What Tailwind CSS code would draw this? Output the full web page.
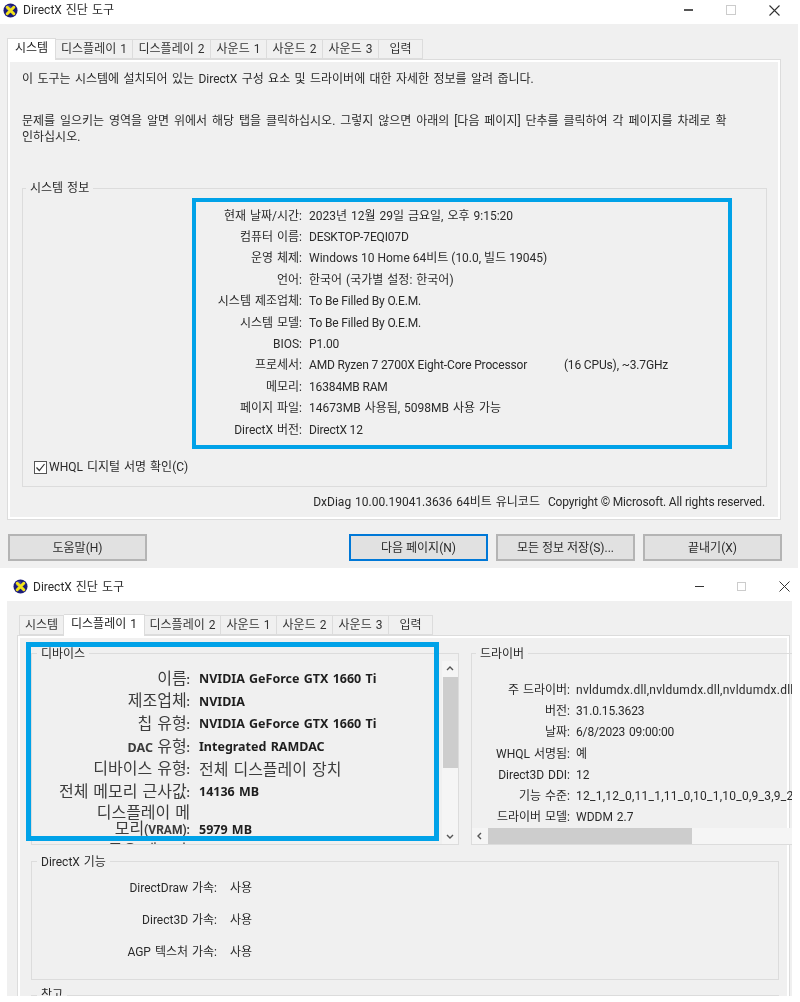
<!DOCTYPE html>
<html lang="ko">

<head>
  <meta charset="UTF-8">
  <title>DirectX 진단 도구</title>
  <script src="https://cdn.jsdelivr.net/npm/@tailwindcss/browser@4"></script>
</head>

<body class="bg-white text-[#2a2a2a] text-[12px] leading-[16px] [word-spacing:1px] font-['Roboto','Noto_Sans_CJK_KR',sans-serif] overflow-hidden">
  <div class="w-[800px] h-[1002px] overflow-hidden blur-[0.3px]">

    <!-- Window 1: system tab -->
    <section class="h-[568px] w-[798px] bg-[#f0f0f0] relative">
      <header class="h-[24px] bg-white flex items-center pl-[3px] pb-[4px]">
        <svg class="w-[15px] h-[15px]" viewBox="0 0 16 16">
          <circle cx="8" cy="8" r="7.5" fill="#1c1c7a" />
          <circle cx="6" cy="5" r="3" fill="#5a5ac0" opacity=".6" />
          <path d="M4.5 4.5 11.5 11.5M11.5 4.5 4.5 11.5" stroke="#f2e21c" stroke-width="3.2" stroke-linecap="round" />
        </svg>
        <span class="ml-[5px]">DirectX 진단 도구</span>
        <div class="ml-auto flex items-center pr-[18px] gap-[33px]">
          <span class="w-[9px] h-[2px] bg-[#555]"></span>
          <span class="w-[10px] h-[10px] border border-[#ccc]"></span>
          <svg class="w-[11px] h-[11px]" viewBox="0 0 11 11">
            <path d="M.5.5l10 10M10.5.5l-10 10" stroke="#333" stroke-width="1.1" fill="none" />
          </svg>
        </div>
      </header>

      <div class="pt-[13px] pl-[7px] flex items-end h-[35px] relative z-10 text-[#333]">
        <div class="h-[22px] w-[49px] -mb-px border border-[#dcdcdc] border-b-0 bg-white flex items-center justify-center text-[#222] pb-[3px]">시스템</div>
        <div class="h-[20px] w-[77px] border border-l-0 border-[#dcdcdc] flex items-center justify-center">디스플레이 1</div>
        <div class="h-[20px] w-[78px] border border-l-0 border-[#dcdcdc] flex items-center justify-center">디스플레이 2</div>
        <div class="h-[20px] w-[56px] border border-l-0 border-[#dcdcdc] flex items-center justify-center">사운드 1</div>
        <div class="h-[20px] w-[56px] border border-l-0 border-[#dcdcdc] flex items-center justify-center">사운드 2</div>
        <div class="h-[20px] w-[56px] border border-l-0 border-[#dcdcdc] flex items-center justify-center">사운드 3</div>
        <div class="h-[20px] w-[44px] border border-l-0 border-[#dcdcdc] flex items-center justify-center">입력</div>
      </div>

      <div class="ml-[7px] w-[774px] h-[461px] border border-[#dcdcdc] relative">
        <div class="h-full border-2 border-white px-[12px] pt-[9px]">
          <p class="h-[16px] whitespace-nowrap [word-spacing:1.4px]">이 도구는 시스템에 설치되어 있는 DirectX 구성 요소 및 드라이버에 대한 자세한 정보를 알려 줍니다.</p>
          <p class="mt-[26px] w-[730px] [word-spacing:1.9px]">문제를 일으키는 영역을 알면 위에서 해당 탭을 클릭하십시오. 그렇지 않으면 아래의 [다음 페이지] 단추를 클릭하여 각 페이지를 차례로 확<br>인하십시오.</p>

          <fieldset class="mt-[35px] w-[745px] h-[307px] border border-[#dcdcdc]">
            <legend class="ml-[3px] px-[4px] h-[16px]">시스템 정보</legend>
            <div class="pt-[9px]">
              <div class="h-[21.4px] flex items-center"><span class="w-[279px] text-right">현재 날짜/시간:</span><span class="ml-[7px]">2023년 12월 29일 금요일, 오후 9:15:20</span></div>
              <div class="h-[21.4px] flex items-center"><span class="w-[279px] text-right">컴퓨터 이름:</span><span class="ml-[7px] [word-spacing:0] tracking-[-0.15px]">DESKTOP-7EQI07D</span></div>
              <div class="h-[21.4px] flex items-center"><span class="w-[279px] text-right">운영 체제:</span><span class="ml-[7px] [word-spacing:0]">Windows 10 Home 64비트 (10.0, 빌드 19045)</span></div>
              <div class="h-[21.4px] flex items-center"><span class="w-[279px] text-right">언어:</span><span class="ml-[7px]">한국어 (국가별 설정: 한국어)</span></div>
              <div class="h-[21.4px] flex items-center"><span class="w-[279px] text-right">시스템 제조업체:</span><span class="ml-[7px] [word-spacing:0] tracking-[-0.15px]">To Be Filled By O.E.M.</span></div>
              <div class="h-[21.4px] flex items-center"><span class="w-[279px] text-right">시스템 모델:</span><span class="ml-[7px] [word-spacing:0] tracking-[-0.15px]">To Be Filled By O.E.M.</span></div>
              <div class="h-[21.4px] flex items-center"><span class="w-[279px] text-right">BIOS:</span><span class="ml-[7px] tracking-[-0.15px]">P1.00</span></div>
              <div class="h-[21.4px] flex items-center"><span class="w-[279px] text-right">프로세서:</span><span class="ml-[7px] whitespace-pre [word-spacing:0] tracking-[-0.15px]">AMD Ryzen 7 2700X Eight-Core Processor             (16 CPUs), ~3.7GHz</span></div>
              <div class="h-[21.4px] flex items-center"><span class="w-[279px] text-right">메모리:</span><span class="ml-[7px] [word-spacing:0] tracking-[-0.15px]">16384MB RAM</span></div>
              <div class="h-[21.4px] flex items-center"><span class="w-[279px] text-right">페이지 파일:</span><span class="ml-[7px]">14673MB 사용됨, 5098MB 사용 가능</span></div>
              <div class="h-[21.4px] flex items-center"><span class="w-[279px] text-right">DirectX 버전:</span><span class="ml-[7px] [word-spacing:0] tracking-[-0.15px]">DirectX 12</span></div>
            </div>
            <label class="mt-[19px] ml-[11px] flex items-center">
              <span class="w-[13px] h-[13px] border border-[#555] bg-white flex items-center justify-center">
                <svg class="w-[11px] h-[11px]" viewBox="0 0 11 11">
                  <path d="M1.5 5.5 4.3 8.5 9.5 2" stroke="#333" stroke-width="1.2" fill="none" />
                </svg>
              </span>
              <span class="ml-[2px]">WHQL 디지털 서명 확인(C)</span>
            </label>
          </fieldset>

          <p class="mt-[7px] w-[743px] text-right whitespace-nowrap">DxDiag 10.00.19041.3636 64비트 유니코드&nbsp; <span class="[word-spacing:0] tracking-[-0.15px]">Copyright © Microsoft. All rights reserved.</span></p>
        </div>

        <!-- highlight -->
        <div class="absolute left-[184px] top-[138px] w-[540px] h-[251px] border-[4px] border-[#00a2e8]"></div>
      </div>

      <div class="mt-[14px] px-[8px] flex">
        <button class="w-[139px] h-[27px] bg-[#e1e1e1] border-2 border-[#b4b4b4]">도움말(H)</button>
        <button class="ml-[202px] w-[139px] h-[27px] bg-[#e1e1e1] border-2 border-[#0078d7]">다음 페이지(N)</button>
        <button class="ml-[8px] w-[139px] h-[27px] bg-[#e1e1e1] border-2 border-[#b4b4b4]">모든 정보 저장(S)...</button>
        <button class="ml-[8px] w-[139px] h-[27px] bg-[#e1e1e1] border-2 border-[#b4b4b4]">끝내기(X)</button>
      </div>
    </section>

    <!-- Window 2: display tab -->
    <section class="h-[428px] bg-white">
      <header class="h-[33px] flex items-center pl-[13px] pt-[4px]">
        <svg class="w-[15px] h-[15px]" viewBox="0 0 16 16">
          <circle cx="8" cy="8" r="7.5" fill="#1c1c7a" />
          <circle cx="6" cy="5" r="3" fill="#5a5ac0" opacity=".6" />
          <path d="M4.5 4.5 11.5 11.5M11.5 4.5 4.5 11.5" stroke="#f2e21c" stroke-width="3.2" stroke-linecap="round" />
        </svg>
        <span class="ml-[5px]">DirectX 진단 도구</span>
        <div class="ml-auto flex items-center pr-[10px] gap-[33px]">
          <span class="w-[9px] h-px bg-[#333]"></span>
          <span class="w-[9px] h-[9px] border border-[#ccc]"></span>
          <svg class="w-[11px] h-[11px]" viewBox="0 0 11 11">
            <path d="M.5.5l10 10M10.5.5l-10 10" stroke="#333" stroke-width="1" fill="none" />
          </svg>
        </div>
      </header>

      <div class="ml-[7px] w-[785px] h-[395px] bg-[#f0f0f0] overflow-hidden">
        <div class="pt-[12px] pl-[12px] flex items-end h-[34px] relative z-10 text-[#333]">
          <div class="h-[20px] w-[45px] border border-[#dcdcdc] flex items-center justify-center">시스템</div>
          <div class="h-[22px] w-[81px] -mb-px border border-l-0 border-b-0 border-[#dcdcdc] bg-white flex items-center justify-center text-[#222] pb-[3px]">디스플레이 1</div>
          <div class="h-[20px] w-[76px] border border-l-0 border-[#dcdcdc] flex items-center justify-center">디스플레이 2</div>
          <div class="h-[20px] w-[56px] border border-l-0 border-[#dcdcdc] flex items-center justify-center">사운드 1</div>
          <div class="h-[20px] w-[56px] border border-l-0 border-[#dcdcdc] flex items-center justify-center">사운드 2</div>
          <div class="h-[20px] w-[56px] border border-l-0 border-[#dcdcdc] flex items-center justify-center">사운드 3</div>
          <div class="h-[20px] w-[44px] border border-l-0 border-[#dcdcdc] flex items-center justify-center">입력</div>
        </div>

        <div class="ml-[10px] w-[773px] h-[400px] border border-[#dcdcdc] relative">
          <div class="h-full border-l-2 border-t-2 border-r-2 border-white pl-[11px] pt-[7px]">
            <div class="flex">
              <fieldset class="w-[428px] h-[200px] border border-[#dcdcdc] relative">
                <legend class="ml-[5px] px-[4px] pt-[1px] h-[16px]">디바이스</legend>
                <div class="flex h-[183px]">
                  <div class="w-[410px] h-[183px] overflow-hidden pt-[7px] text-[16px] text-[#3c3c3c]">
                    <div class="h-[22.6px] flex items-center"><span class="w-[158px] text-right">이름<b class="text-[12px]">:</b></span><b class="ml-[9px] font-['Noto_Sans'] text-[12.5px] text-[#1e1e1e]">NVIDIA GeForce GTX 1660 Ti</b></div>
                    <div class="h-[22.6px] flex items-center"><span class="w-[158px] text-right">제조업체<b class="text-[12px]">:</b></span><b class="ml-[9px] font-['Noto_Sans'] text-[12.5px] text-[#1e1e1e]">NVIDIA</b></div>
                    <div class="h-[22.6px] flex items-center"><span class="w-[158px] text-right">칩 유형<b class="text-[12px]">:</b></span><b class="ml-[9px] font-['Noto_Sans'] text-[12.5px] text-[#1e1e1e]">NVIDIA GeForce GTX 1660 Ti</b></div>
                    <div class="h-[22.6px] flex items-center"><span class="w-[158px] text-right"><b class="font-['Noto_Sans'] text-[12.5px]">DAC </b>유형<b class="text-[12px]">:</b></span><b class="ml-[9px] font-['Noto_Sans'] text-[12.5px] text-[#1e1e1e]">Integrated RAMDAC</b></div>
                    <div class="h-[22.6px] flex items-center"><span class="w-[158px] text-right">디바이스 유형<b class="text-[12px]">:</b></span><span class="ml-[9px]">전체 디스플레이 장치</span></div>
                    <div class="h-[22.6px] flex items-center"><span class="w-[158px] text-right">전체 메모리 근사값<b class="text-[12px]">:</b></span><b class="ml-[9px] font-['Noto_Sans'] text-[12.5px] text-[#1e1e1e]">14136 MB</b></div>
                    <div class="h-[34px] flex items-end"><span class="w-[158px] text-right leading-[16px]">디스플레이 메<br>모리<b class="text-[12px]">(VRAM):</b></span><b class="ml-[9px] font-['Noto_Sans'] text-[12.5px] text-[#1e1e1e]">5979 MB</b></div>
                    <div class="h-[22.6px] mt-[3px] flex items-center"><span class="w-[158px] text-right">공유 메모리<b class="text-[12px]">:</b></span></div>
                  </div>
                  <div class="w-[16px] bg-[#f5f5f5] flex flex-col items-center text-[#555]">
                    <svg class="w-[16px] h-[16px]" viewBox="0 0 16 16"><path d="M5 9l3-3 3 3" stroke="#555" stroke-width="1.4" fill="none" /></svg>
                    <div class="w-[15px] h-[91px] bg-[#cdcdcd]"></div>
                    <div class="flex-1"></div>
                    <svg class="w-[16px] h-[16px]" viewBox="0 0 16 16"><path d="M5 7l3 3 3-3" stroke="#555" stroke-width="1.4" fill="none" /></svg>
                  </div>
                </div>
              </fieldset>

              <fieldset class="ml-[12px] w-[308px] h-[200px] border border-[#dcdcdc]">
                <legend class="ml-[4px] px-[4px] pt-[1px] h-[16px]">드라이버</legend>
                <div class="h-[167px] overflow-hidden pt-[18px] whitespace-nowrap">
                  <div class="h-[21.3px] flex items-center"><span class="w-[98px] shrink-0 text-right">주 드라이버:</span><span class="ml-[6px] tracking-[0.25px]">nvldumdx.dll,nvldumdx.dll,nvldumdx.dll,nvldumdx.dll</span></div>
                  <div class="h-[21.3px] flex items-center"><span class="w-[98px] shrink-0 text-right">버전:</span><span class="ml-[6px] tracking-[-0.15px]">31.0.15.3623</span></div>
                  <div class="h-[21.3px] flex items-center"><span class="w-[98px] shrink-0 text-right">날짜:</span><span class="ml-[6px] tracking-[-0.15px]">6/8/2023 09:00:00</span></div>
                  <div class="h-[21.3px] flex items-center"><span class="w-[98px] shrink-0 text-right">WHQL 서명됨:</span><span class="ml-[6px]">예</span></div>
                  <div class="h-[21.3px] flex items-center"><span class="w-[98px] shrink-0 text-right">Direct3D DDI:</span><span class="ml-[6px]">12</span></div>
                  <div class="h-[21.3px] flex items-center"><span class="w-[98px] shrink-0 text-right">기능 수준:</span><span class="ml-[6px] tracking-[0.25px]">12_1,12_0,11_1,11_0,10_1,10_0,9_3,9_2,9_1</span></div>
                  <div class="h-[21.3px] flex items-center"><span class="w-[98px] shrink-0 text-right">드라이버 모델:</span><span class="ml-[6px]">WDDM 2.7</span></div>
                </div>
                <div class="h-[16px] bg-[#f5f5f5] flex items-center">
                  <svg class="w-[16px] h-[16px]" viewBox="0 0 16 16"><path d="M9 5 6 8l3 3" stroke="#555" stroke-width="1.4" fill="none" /></svg>
                  <div class="w-[204px] h-[16px] bg-[#cdcdcd]"></div>
                  <div class="flex-1"></div>
                  <svg class="w-[16px] h-[16px]" viewBox="0 0 16 16"><path d="M7 5l3 3-3 3" stroke="#555" stroke-width="1.4" fill="none" /></svg>
                </div>
              </fieldset>
            </div>

            <fieldset class="mt-[8px] w-[748px] h-[127px] border border-[#dcdcdc]">
              <legend class="ml-[5px] px-[4px] pt-[1px] h-[16px]">DirectX 기능</legend>
              <div class="pt-[3px]">
                <div class="h-[32px] flex items-center"><span class="w-[185px] text-right">DirectDraw 가속:</span><span class="ml-[13px]">사용</span></div>
                <div class="h-[32px] flex items-center"><span class="w-[185px] text-right">Direct3D 가속:</span><span class="ml-[13px]">사용</span></div>
                <div class="h-[32px] flex items-center"><span class="w-[185px] text-right">AGP 텍스처 가속:</span><span class="ml-[13px]">사용</span></div>
              </div>
            </fieldset>

            <fieldset class="mt-[7px] w-[748px] h-[60px] border border-[#dcdcdc]">
              <legend class="ml-[5px] px-[4px] h-[16px]">참고</legend>
            </fieldset>
          </div>

          <!-- highlight -->
          <div class="absolute left-[8px] top-[6px] w-[413px] h-[199px] border-[5px] border-[#00a2e8]"></div>
        </div>
      </div>
    </section>
  </div>
</body>

</html>
